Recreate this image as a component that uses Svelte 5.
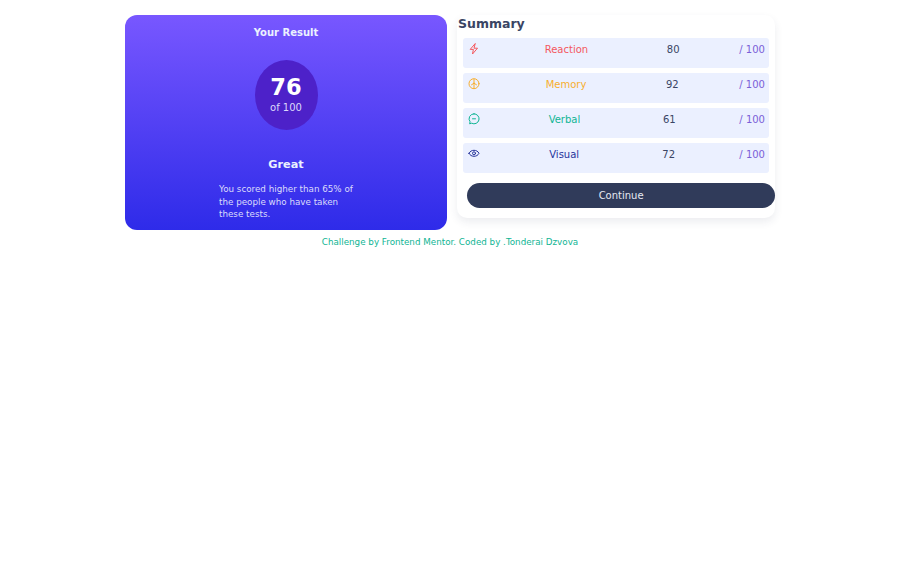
<script>
  const rows = [
    { name: 'Reaction', score: 80, color: '#f4585e', icon: 'bolt' },
    { name: 'Memory', score: 92, color: '#f7ae2e', icon: 'brain' },
    { name: 'Verbal', score: 61, color: '#0fb594', icon: 'chat' },
    { name: 'Visual', score: 72, color: '#26349c', icon: 'eye' }
  ];
</script>

<main class="page">
  <div class="wrapper">
    <section class="result">
      <h1>Your Result</h1>
      <div class="circle">
        <span class="score">76</span>
        <span class="of">of 100</span>
      </div>
      <h2>Great</h2>
      <p>You scored higher than 65% of the people who have taken these tests.</p>
    </section>

    <section class="summary">
      <h2>Summary</h2>
      {#each rows as row}
        <div class="row">
          <svg class="icon" viewBox="0 0 12 12" fill="none" stroke={row.color} stroke-width="1" stroke-linejoin="round" stroke-linecap="round">
            {#if row.icon === 'bolt'}
              <path d="M7 .8 2.200 6.400h3.200l-.9 4.600 5-5.800H6.400z" />
            {:else if row.icon === 'brain'}
              <circle cx="6" cy="5.700" r="5" />
              <path d="M6 1.500v8.500M3.500 6.800 6 5.200M8.500 6.800 6 5.200" />
            {:else if row.icon === 'chat'}
              <path d="M6 .8a5 5 0 1 1-2.300 9.400L1.600 10.800l.5-2A5 5 0 0 1 6 .8z" />
              <path d="M4.500 5.800h3" />
            {:else}
              <path d="M1 5.300C2 3.300 3.800 2.300 6 2.300s4 1 5 3c-1 2-2.800 3-5 3s-4-1-5-3z" />
              <circle cx="6" cy="5.300" r="1.500" />
            {/if}
          </svg>
          <span class="name" style="color: {row.color}">{row.name}</span>
          <span class="value">{row.score}</span>
          <span class="total">/ 100</span>
        </div>
      {/each}
      <button type="button">Continue</button>
    </section>
  </div>
  <footer>Challenge by Frontend Mentor. Coded by .Tonderai Dzvova</footer>
</main>

<style>
  :global(body) {
    margin: 0;
    background: #fff;
    font-family: "DejaVu Sans", sans-serif;
  }

  .page {
    padding-top: 15px;
  }

  .wrapper {
    width: 650px;
    margin: 0 auto;
    display: flex;
    align-items: flex-start;
    gap: 10px;
  }

  .result {
    box-sizing: border-box;
    width: 322px;
    height: 215px;
    flex: none;
    padding-top: 11px;
    border-radius: 12px;
    background: linear-gradient(#7857ff, #2e2be9);
    color: #fff;
    display: flex;
    flex-direction: column;
    align-items: center;
  }

  .result h1 {
    margin: 0;
    font-size: 10px;
    line-height: 13px;
    font-weight: 700;
    color: #ebf1ff;
  }

  .circle {
    box-sizing: border-box;
    width: 63px;
    height: 70px;
    margin-top: 21px;
    padding-bottom: 3px;
    border-radius: 50%;
    background: #4d21c9;
    display: flex;
    flex-direction: column;
    align-items: center;
    justify-content: center;
  }

  .score {
    font-size: 22.500px;
    line-height: 28px;
    font-weight: 700;
  }

  .of {
    font-size: 10px;
    line-height: 13px;
    color: #dcd8fb;
  }

  .result h2 {
    margin: 27px 0 0;
    font-size: 11.250px;
    line-height: 16px;
    font-weight: 700;
    color: #ebf1ff;
  }

  .result p {
    width: 134px;
    margin: 10px 0 0 0;
    font-size: 8.750px;
    line-height: 12.500px;
    color: #dcdcfb;
  }

  .summary {
    box-sizing: border-box;
    width: 318px;
    height: 203px;
    flex: none;
    border-radius: 10px;
    box-shadow: 0 4px 8px rgba(48, 60, 90, 0.09);
    padding: 0 0 0 5.700px;
    display: flex;
    flex-direction: column;
    gap: 5px;
  }

  .summary h2 {
    margin: 0 0 0 -4.700px;
    font-size: 12.500px;
    line-height: 18px;
    font-weight: 700;
    color: #3a4564;
  }

  .row {
    box-sizing: border-box;
    width: 306.600px;
    height: 30px;
    padding: 5px 4.300px 0 5.300px;
    border-radius: 3px;
    background: #ebf0ff;
    display: flex;
    justify-content: space-between;
    align-items: flex-start;
    font-size: 10px;
    line-height: 13px;
  }

  .icon {
    width: 12px;
    height: 12px;
    margin-right: -14px;
  }

  .value {
    margin-right: -19px;
    color: #3a4564;
  }

  .total {
    color: #7a5fd8;
  }

  button {
    width: 307.700px;
    height: 25px;
    margin: 4.500px 0 0 4.600px;
    padding: 0;
    border: none;
    border-radius: 13px;
    background: #303b5a;
    color: #e6e9f2;
    font: 10px "DejaVu Sans", sans-serif;
  }

  footer {
    margin-top: 6px;
    text-align: center;
    font-size: 8.750px;
    line-height: 13px;
    color: #0fb594;
  }
</style>
